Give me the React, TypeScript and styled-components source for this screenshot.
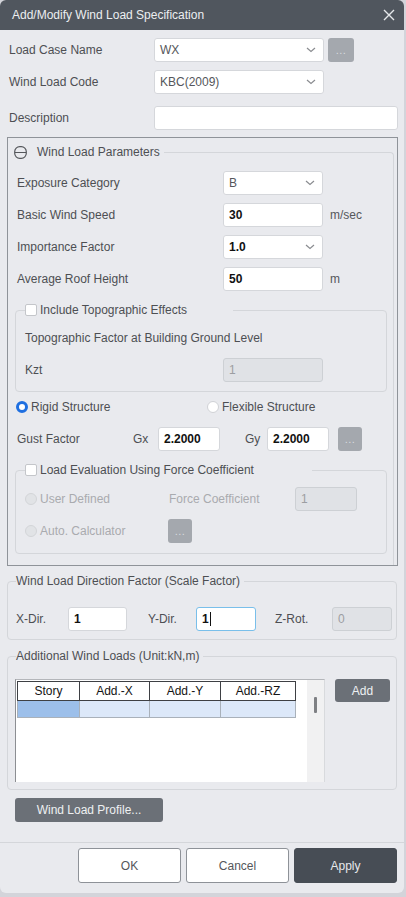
import React from "react";
import styled, { createGlobalStyle } from "styled-components";

const GlobalStyle = createGlobalStyle`
  html, body { margin: 0; padding: 0; background: #d3d4da; }
  body {
    font-family: "Liberation Sans", Arial, sans-serif;
    font-size: 12px;
    color: #4d4f53;
  }
  * { box-sizing: border-box; }
`;

const Dialog = styled.div`
  width: 404px;
  height: 893px;
  background: #e9eaee;
  border-radius: 6px;
  overflow: hidden;
  display: flex;
  flex-direction: column;
`;

const TitleBar = styled.div`
  height: 30px;
  flex-shrink: 0;
  background: #50565e;
  color: #eceef1;
  font-size: 12px;
  display: flex;
  align-items: center;
  justify-content: space-between;
  padding: 0 8px 0 12px;
`;

const CloseButton = styled.span`
  width: 14px;
  height: 14px;
  display: flex;
  align-items: center;
  justify-content: center;
`;

const Body = styled.div`
  padding: 0 6px 0 7px;
  display: flex;
  flex-direction: column;
`;

const Row = styled.div<{ $mt?: number; $pl?: number; $h?: number }>`
  display: flex;
  align-items: center;
  height: ${(p) => p.$h ?? 24}px;
  margin-top: ${(p) => p.$mt ?? 0}px;
  padding-left: ${(p) => p.$pl ?? 0}px;
  white-space: nowrap;
`;

const Label = styled.span<{ $w?: number; $ml?: number; $disabled?: boolean }>`
  flex-shrink: 0;
  width: ${(p) => (p.$w ? `${p.$w}px` : "auto")};
  margin-left: ${(p) => p.$ml ?? 0}px;
  color: ${(p) => (p.$disabled ? "#a9abaf" : "#4d4f53")};
`;

const SelectBox = styled.div<{ $w: number; $bold?: boolean }>`
  width: ${(p) => p.$w}px;
  height: 24px;
  flex-shrink: 0;
  background: #ffffff;
  border: 1px solid #d5d7db;
  border-radius: 3px;
  display: flex;
  align-items: center;
  justify-content: space-between;
  padding: 0 7px 0 5px;
  color: ${(p) => (p.$bold ? "#111" : "#55575b")};
  font-weight: ${(p) => (p.$bold ? 700 : 400)};
`;

const Field = styled.div<{
  $w: number;
  $h?: number;
  $ml?: number;
  $disabled?: boolean;
  $focused?: boolean;
  $bold?: boolean;
}>`
  width: ${(p) => p.$w}px;
  height: ${(p) => p.$h ?? 24}px;
  margin-left: ${(p) => p.$ml ?? 0}px;
  flex-shrink: 0;
  background: ${(p) => (p.$disabled ? "#e0e2e6" : "#ffffff")};
  border: 1px solid
    ${(p) => (p.$focused ? "#79bfea" : p.$disabled ? "#cdd0d4" : "#d5d7db")};
  border-radius: 3px;
  display: flex;
  align-items: center;
  padding: 0 5px;
  color: ${(p) => (p.$disabled ? "#9c9ea2" : "#111")};
  font-weight: ${(p) => (p.$bold ? 700 : 400)};
`;

const Caret = styled.span`
  display: inline-block;
  width: 1px;
  height: 14px;
  background: #111;
  margin-left: 1px;
`;

const DotsButton = styled.button<{ $w?: number; $h?: number; $ml?: number }>`
  width: ${(p) => p.$w ?? 26}px;
  height: ${(p) => p.$h ?? 24}px;
  margin-left: ${(p) => p.$ml ?? 0}px;
  flex-shrink: 0;
  background: #a4a8ae;
  border: none;
  border-radius: 3px;
  color: #d9dbdf;
  font-family: inherit;
  font-size: 11px;
  padding: 0;
  line-height: 1;
  letter-spacing: 0.5px;
`;

const Unit = styled.span`
  margin-left: 7px;
  color: #55575b;
`;

const OuterPanel = styled.div`
  margin-top: 7px;
  border: 1px solid #8f9399;
`;

const MainFieldset = styled.fieldset`
  margin: 7px 3px 0 0;
  padding: 12px 0 11px 0;
  border: 1px solid #d4d6da;
  border-left: none;
  border-bottom: none;
  border-radius: 0 4px 0 0;
  min-width: 0;
`;

const Fieldset = styled.fieldset<{ $m: string; $pad: string }>`
  margin: ${(p) => p.$m};
  padding: ${(p) => p.$pad};
  border: 1px solid #d4d6da;
  border-radius: 4px;
  min-width: 0;
`;

const Legend = styled.legend<{ $pr?: number; $ml?: number }>`
  padding: 0 ${(p) => p.$pr ?? 4}px 0 0;
  margin-left: ${(p) => p.$ml ?? 0}px;
  line-height: 14px;
  height: 14px;
  display: flex;
  align-items: center;
  white-space: nowrap;
  color: #4d4f53;
`;

const CollapseIcon = styled.svg`
  margin: 0 10px 0 6px;
  flex-shrink: 0;
`;

const CheckBox = styled.span`
  width: 12px;
  height: 12px;
  flex-shrink: 0;
  background: #fff;
  border: 1px solid #c4c6ca;
  border-radius: 2px;
  margin-right: 3px;
`;

const Radio = styled.span<{ $checked?: boolean; $disabled?: boolean }>`
  width: 12px;
  height: 12px;
  flex-shrink: 0;
  border-radius: 50%;
  margin-right: 3px;
  background: ${(p) => (p.$disabled ? "#e1e3e6" : "#ffffff")};
  border: ${(p) =>
    p.$checked ? "3px solid #1f6fe0" : p.$disabled ? "1px solid #d3d5d8" : "1px solid #d0d2d6"};
`;

const RadioOption = styled.span<{ $w?: number; $disabled?: boolean }>`
  display: flex;
  align-items: center;
  flex-shrink: 0;
  width: ${(p) => (p.$w ? `${p.$w}px` : "auto")};
  color: ${(p) => (p.$disabled ? "#a9abaf" : "#4d4f53")};
`;

const TableRow = styled.div`
  display: flex;
  align-items: flex-start;
`;

const TableFrame = styled.div`
  width: 310px;
  height: 103px;
  flex-shrink: 0;
  background: #ffffff;
  border-left: 1px solid #8c8e92;
  border-top: 1px solid #b4b6ba;
  border-right: 1px solid #d8dadd;
  display: flex;
`;

const Grid = styled.div`
  display: grid;
  grid-template-columns: 63px 70px 71px 75px;
  grid-template-rows: 20px 17px;
  margin: 1px 0 0 1px;
  align-self: flex-start;
`;

const HeaderCell = styled.div`
  border: 1px solid #3e4044;
  margin-left: -1px;
  background: #fff;
  color: #141414;
  display: flex;
  align-items: center;
  justify-content: center;
  &:first-child { margin-left: 0; }
`;

const BodyCell = styled.div<{ $selected?: boolean; $first?: boolean }>`
  border: 1px solid #a9b1ba;
  border-top: none;
  margin-left: ${(p) => (p.$first ? 0 : -1)}px;
  background: ${(p) => (p.$selected ? "#9cbfea" : "#dce8f9")};
`;

const ScrollTrack = styled.div`
  margin-left: auto;
  width: 17px;
  background: #f1f1f2;
  padding: 17px 0 0 7px;
`;

const ScrollThumb = styled.div`
  width: 3px;
  height: 16px;
  background: #7e8084;
  border-radius: 1px;
`;

const DarkButton = styled.button<{ $w: number; $h: number; $ml?: number }>`
  width: ${(p) => p.$w}px;
  height: ${(p) => p.$h}px;
  margin-left: ${(p) => p.$ml ?? 0}px;
  flex-shrink: 0;
  background: #6b7077;
  color: #eef0f2;
  border: none;
  border-radius: 3px;
  font-family: inherit;
  font-size: 12px;
  padding: 0;
`;

const Footer = styled.div`
  margin-top: auto;
  border-top: 1px solid #d4d6da;
  padding: 5px 7px 10px 7px;
  display: flex;
  justify-content: flex-end;
  gap: 5px;
`;

const FooterButton = styled.button<{ $primary?: boolean }>`
  width: 103px;
  height: 35px;
  border-radius: 3px;
  font-family: inherit;
  font-size: 12px;
  background: ${(p) => (p.$primary ? "#474d55" : "#ffffff")};
  color: ${(p) => (p.$primary ? "#e6e8eb" : "#55575b")};
  border: 1px solid ${(p) => (p.$primary ? "#474d55" : "#8e9298")};
`;

const Chevron = () => (
  <svg width="10" height="6" viewBox="0 0 10 6">
    <path d="M1 1 L5 4.5 L9 1" fill="none" stroke="#8a8c90" strokeWidth="1.2" />
  </svg>
);

const Select = ({ w, value, bold }: { w: number; value: string; bold?: boolean }) => (
  <SelectBox $w={w} $bold={bold}>
    <span>{value}</span>
    <Chevron />
  </SelectBox>
);

export default function App() {
  return (
    <>
      <GlobalStyle />
      <Dialog>
        <TitleBar>
          <span>Add/Modify Wind Load Specification</span>
          <CloseButton>
            <svg width="12" height="12" viewBox="0 0 12 12">
              <path d="M1 1 L11 11 M11 1 L1 11" stroke="#e6e8eb" strokeWidth="1.4" />
            </svg>
          </CloseButton>
        </TitleBar>
        <Body>
          <Row $mt={8} $pl={2}>
            <Label $w={145}>Load Case Name</Label>
            <Select w={170} value="WX" />
            <DotsButton $ml={4}>...</DotsButton>
          </Row>
          <Row $mt={8} $pl={2}>
            <Label $w={145}>Wind Load Code</Label>
            <Select w={170} value="KBC(2009)" />
          </Row>
          <Row $mt={12} $pl={2}>
            <Label $w={145}>Description</Label>
            <Field $w={244} />
          </Row>

          <OuterPanel>
            <MainFieldset>
              <Legend>
                <CollapseIcon width="13" height="13" viewBox="0 0 13 13">
                  <rect x="0.7" y="0.7" width="11.6" height="11.6" rx="5" fill="none" stroke="#55575b" strokeWidth="1.2" />
                  <path d="M1 6.5 H12" stroke="#55575b" strokeWidth="1.2" />
                </CollapseIcon>
                Wind Load Parameters
              </Legend>
              <Row $pl={9}>
                <Label $w={206}>Exposure Category</Label>
                <Select w={100} value="B" />
              </Row>
              <Row $pl={9} $mt={8}>
                <Label $w={206}>Basic Wind Speed</Label>
                <Field $w={100} $bold>30</Field>
                <Unit>m/sec</Unit>
              </Row>
              <Row $pl={9} $mt={8}>
                <Label $w={206}>Importance Factor</Label>
                <Select w={100} value="1.0" bold />
              </Row>
              <Row $pl={9} $mt={8}>
                <Label $w={206}>Average Roof Height</Label>
                <Field $w={100} $bold>50</Field>
                <Unit>m</Unit>
              </Row>

              <Fieldset $m="12px 6px 0 7px" $pad="9px 9px 9px 9px">
                <Legend $pr={46}>
                  <CheckBox />
                  Include Topographic Effects
                </Legend>
                <Row>
                  <Label>Topographic Factor at Building Ground Level</Label>
                </Row>
                <Row $mt={8}>
                  <Label $w={198}>Kzt</Label>
                  <Field $w={100} $disabled>1</Field>
                </Row>
              </Fieldset>

              <Row $mt={5} $h={20} $pl={8}>
                <RadioOption $w={191}>
                  <Radio $checked />
                  Rigid Structure
                </RadioOption>
                <RadioOption>
                  <Radio />
                  Flexible Structure
                </RadioOption>
              </Row>
              <Row $mt={10} $pl={9}>
                <Label $w={116}>Gust Factor</Label>
                <Label $w={25}>Gx</Label>
                <Field $w={62} $bold>2.2000</Field>
                <Label $w={22} $ml={25}>Gy</Label>
                <Field $w={62} $bold>2.2000</Field>
                <DotsButton $w={24} $ml={9}>...</DotsButton>
              </Row>

              <Fieldset $m="12px 6px 0 7px" $pad="10px 9px 10px 9px">
                <Legend $pr={58}>
                  <CheckBox />
                  Load Evaluation Using Force Coefficient
                </Legend>
                <Row>
                  <RadioOption $w={144} $disabled>
                    <Radio $disabled />
                    User Defined
                  </RadioOption>
                  <Label $w={126} $disabled>Force Coefficient</Label>
                  <Field $w={62} $disabled>1</Field>
                </Row>
                <Row $mt={8}>
                  <RadioOption $w={143} $disabled>
                    <Radio $disabled />
                    Auto. Calculator
                  </RadioOption>
                  <DotsButton $w={24}>...</DotsButton>
                </Row>
              </Fieldset>
            </MainFieldset>
          </OuterPanel>

          <Fieldset $m="8px 1px 0 0" $pad="19px 8px 8px 8px">
            <Legend>Wind Load Direction Factor (Scale Factor)</Legend>
            <Row>
              <Label $w={52}>X-Dir.</Label>
              <Field $w={59} $bold>1</Field>
              <Label $w={48} $ml={21}>Y-Dir.</Label>
              <Field $w={60} $bold $focused>
                1<Caret />
              </Field>
              <Label $w={57} $ml={19}>Z-Rot.</Label>
              <Field $w={60} $disabled>0</Field>
            </Row>
          </Fieldset>

          <Fieldset $m="9px 1px 0 0" $pad="16px 8px 7px 7px">
            <Legend $ml={1}>Additional Wind Loads (Unit:kN,m)</Legend>
            <TableRow>
              <TableFrame>
                <Grid>
                  <HeaderCell>Story</HeaderCell>
                  <HeaderCell>Add.-X</HeaderCell>
                  <HeaderCell>Add.-Y</HeaderCell>
                  <HeaderCell>Add.-RZ</HeaderCell>
                  <BodyCell $selected $first />
                  <BodyCell />
                  <BodyCell />
                  <BodyCell />
                </Grid>
                <ScrollTrack>
                  <ScrollThumb />
                </ScrollTrack>
              </TableFrame>
              <DarkButton $w={55} $h={23} $ml={10}>Add</DarkButton>
            </TableRow>
          </Fieldset>

          <Row $mt={8} $pl={8}>
            <DarkButton $w={148} $h={24}>Wind Load Profile...</DarkButton>
          </Row>
        </Body>
        <Footer>
          <FooterButton>OK</FooterButton>
          <FooterButton>Cancel</FooterButton>
          <FooterButton $primary>Apply</FooterButton>
        </Footer>
      </Dialog>
    </>
  );
}
